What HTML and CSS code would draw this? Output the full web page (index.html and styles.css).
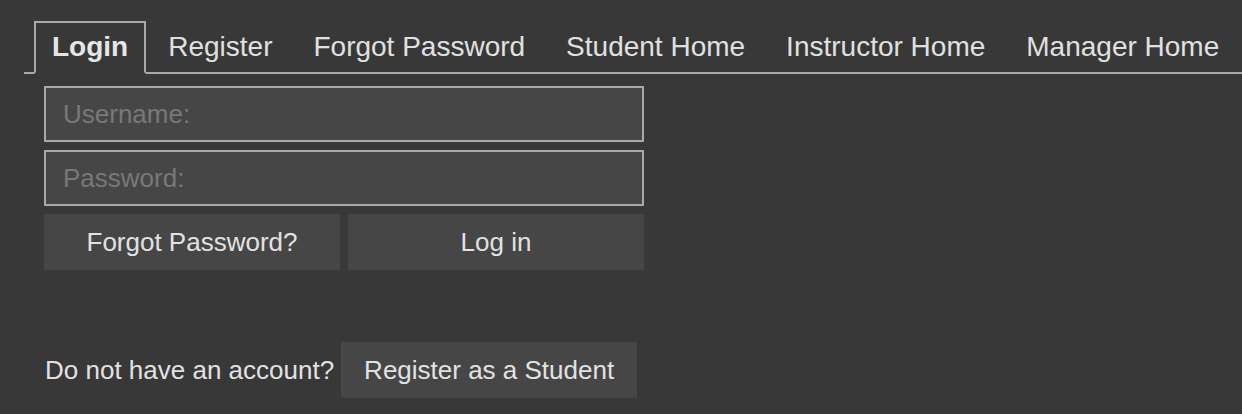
FILE: index.html
```html
<!DOCTYPE html>
<html lang="en">
<head>
<meta charset="utf-8">
<title>Login</title>
<link rel="stylesheet" href="styles.css">
</head>
<body>
<nav class="tabs">
  <a class="tab active" href="#">Login</a>
  <a class="tab" href="#">Register</a>
  <a class="tab" href="#">Forgot Password</a>
  <a class="tab" href="#">Student Home</a>
  <a class="tab" href="#">Instructor Home</a>
  <a class="tab" href="#">Manager Home</a>
</nav>
<main class="content">
  <form class="login-form">
    <input class="field" type="text" placeholder="Username:">
    <input class="field" type="password" placeholder="Password:">
    <div class="actions">
      <button type="button" class="btn">Forgot Password?</button>
      <button type="submit" class="btn">Log in</button>
    </div>
  </form>
  <div class="register-row">
    <span class="register-text">Do not have an account?</span>
    <button type="button" class="btn btn-register">Register as a Student</button>
  </div>
</main>
</body>
</html>
```
FILE: styles.css
```css
html, body {
  margin: 0;
  background: #383838;
}
body {
  padding: 21px 0 0 24px;
  font-family: "Liberation Sans", Arial, Helvetica, sans-serif;
  color: #e2e2e2;
  overflow: hidden;
}
.tabs {
  display: flex;
  padding-left: 10px;
  border-bottom: 2px solid #a9a9a9;
}
.tab {
  display: block;
  flex: 0 0 auto;
  white-space: nowrap;
  padding: 8px 17px 9px;
  margin-right: 3px;
  margin-bottom: -2px;
  border: 2px solid transparent;
  font-size: 28px;
  line-height: 32px;
  color: #e0e0e0;
  text-decoration: none;
}
.tab.active {
  font-weight: bold;
  padding: 8px 16px 9px;
  border-color: #a9a9a9;
  border-bottom-color: #383838;
  background: #383838;
  color: #e6e6e6;
}
.content {
  padding: 12px 0 0 20px;
}
.login-form {
  width: 600px;
  display: flex;
  flex-direction: column;
  gap: 8px;
}
.field {
  box-sizing: border-box;
  height: 56px;
  margin: 0;
  padding: 0 17px;
  border: 2px solid #a9a9a9;
  background: #464646;
  color: #e2e2e2;
  font-family: inherit;
  font-size: 26px;
  outline: none;
}
.field::placeholder {
  color: #787878;
}
.actions {
  display: grid;
  grid-template-columns: 1fr 1fr;
  gap: 8px;
}
.btn {
  height: 56px;
  margin: 0;
  padding: 0 24px;
  border: none;
  background: #464646;
  color: #e2e2e2;
  font-family: inherit;
  font-size: 26px;
  white-space: nowrap;
  cursor: pointer;
}
.btn-register {
  padding: 0 23px;
}
.register-row {
  display: flex;
  align-items: center;
  gap: 7px;
  margin-top: 72px;
}
.register-text {
  font-size: 26px;
  margin-left: 1px;
}
```
